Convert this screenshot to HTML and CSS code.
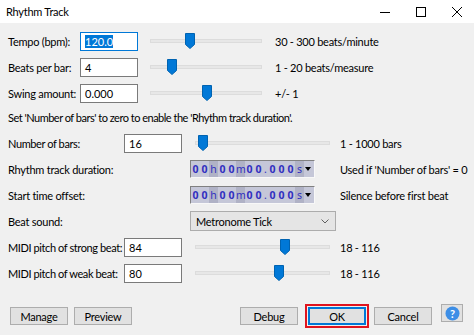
FILE: index.html
```html
<!DOCTYPE html>
<html lang="en">

<head>
    <meta name="viewport" content="width=device-width, initial-scale=1.0">
    <title>Rhythm Track</title>
    <link rel="stylesheet" href="styles.css">
</head>

<body>
    <div class="titlebar">
        <span class="title">Rhythm Track</span>
        <div class="win-buttons">
            <svg width="12" height="12" viewBox="0 0 12 12"><path d="M1 6.5h10" stroke="#000" stroke-width="1"/></svg>
            <svg width="12" height="12" viewBox="0 0 12 12"><rect x="1.5" y="1.5" width="9" height="9" fill="none" stroke="#000" stroke-width="1"/></svg>
            <svg width="12" height="12" viewBox="0 0 12 12"><path d="M1 1l10 10M11 1L1 11" stroke="#000" stroke-width="1"/></svg>
        </div>
    </div>

    <div class="dialog">
        <!-- top group -->
        <div class="row">
            <span class="label w72">Tempo (bpm):</span>
            <div class="input focused"><span class="selected">120.0</span></div>
            <div class="slider short"><div class="track"></div><svg class="thumb" style="left: 35px" width="10" height="16" viewBox="0 0 10 16"><path d="M0.5 0.5h9v11l-4.5 4-4.5-4z" fill="#0078d7" stroke="#0063b1"/></svg></div>
            <span class="hint">30 - 300 beats/minute</span>
        </div>
        <div class="row">
            <span class="label w72">Beats per bar:</span>
            <div class="input">4</div>
            <div class="slider short"><div class="track"></div><svg class="thumb" style="left: 17px" width="10" height="16" viewBox="0 0 10 16"><path d="M0.5 0.5h9v11l-4.5 4-4.5-4z" fill="#0078d7" stroke="#0063b1"/></svg></div>
            <span class="hint">1 - 20 beats/measure</span>
        </div>
        <div class="row">
            <span class="label w72">Swing amount:</span>
            <div class="input">0.000</div>
            <div class="slider short"><div class="track"></div><svg class="thumb" style="left: 52px" width="10" height="16" viewBox="0 0 10 16"><path d="M0.5 0.5h9v11l-4.5 4-4.5-4z" fill="#0078d7" stroke="#0063b1"/></svg></div>
            <span class="hint">+/- 1</span>
        </div>

        <p class="note">Set 'Number of bars' to zero to enable the 'Rhythm track duration'.</p>

        <!-- second group -->
        <div class="row">
            <span class="label w116">Number of bars:</span>
            <div class="input">16</div>
            <div class="slider long"><div class="track"></div><svg class="thumb" style="left: 3px" width="10" height="16" viewBox="0 0 10 16"><path d="M0.5 0.5h9v11l-4.5 4-4.5-4z" fill="#0078d7" stroke="#0063b1"/></svg></div>
            <span class="hint">1 - 1000 bars</span>
        </div>
        <div class="row">
            <span class="label w182">Rhythm track duration:</span>
            <div class="timectl">
                <span>0</span><span>0</span><span class="unit">h</span><span>0</span><span>0</span><span class="unit">m</span><span>0</span><span>0</span><span class="dot">.</span><span>0</span><span>0</span><span>0</span><span class="unit">s</span><span class="arrow"></span>
            </div>
            <span class="hint wide">Used if 'Number of bars' = 0</span>
        </div>
        <div class="row">
            <span class="label w182">Start time offset:</span>
            <div class="timectl">
                <span>0</span><span>0</span><span class="unit">h</span><span>0</span><span>0</span><span class="unit">m</span><span>0</span><span>0</span><span class="dot">.</span><span>0</span><span>0</span><span>0</span><span class="unit">s</span><span class="arrow"></span>
            </div>
            <span class="hint wide">Silence before first beat</span>
        </div>
        <div class="row">
            <span class="label w182">Beat sound:</span>
            <div class="select">
                <span>Metronome Tick</span>
                <svg width="8" height="5" viewBox="0 0 8 5"><path d="M0.5 0.5l3.5 3.5 3.5-3.5" fill="none" stroke="#606060"/></svg>
            </div>
        </div>
        <div class="row">
            <span class="label w116">MIDI pitch of strong beat:</span>
            <div class="input">84</div>
            <div class="slider long"><div class="track"></div><svg class="thumb" style="left: 85px" width="10" height="16" viewBox="0 0 10 16"><path d="M0.5 0.5h9v11l-4.5 4-4.5-4z" fill="#0078d7" stroke="#0063b1"/></svg></div>
            <span class="hint">18 - 116</span>
        </div>
        <div class="row">
            <span class="label w116">MIDI pitch of weak beat:</span>
            <div class="input">80</div>
            <div class="slider long"><div class="track"></div><svg class="thumb" style="left: 79px" width="10" height="16" viewBox="0 0 10 16"><path d="M0.5 0.5h9v11l-4.5 4-4.5-4z" fill="#0078d7" stroke="#0063b1"/></svg></div>
            <span class="hint">18 - 116</span>
        </div>

        <div class="buttons">
            <button class="btn">Manage</button>
            <button class="btn">Preview</button>
            <span class="spacer"></span>
            <button class="btn">Debug</button>
            <span class="ok-mark"><button class="btn default">OK</button></span>
            <button class="btn">Cancel</button>
            <button class="help">
                <svg width="15" height="15" viewBox="0 0 15 15"><circle cx="7.5" cy="7.5" r="7" fill="#3d8ee6"/><text x="7.5" y="11.5" text-anchor="middle" font-family="Lato, sans-serif" font-size="11" font-weight="bold" fill="#fff">?</text></svg>
            </button>
        </div>
    </div>
</body>

</html>
```

FILE: styles.css
```css
html,
body {
    margin: 0;
    padding: 0;
}

body {
    width: 474px;
    height: 335px;
    overflow: hidden;
    background: #f0f0f0;
    font-family: Lato, 'Liberation Sans', sans-serif;
    font-size: 11px;
    letter-spacing: -0.25px;
    color: #000;
}

.titlebar {
    height: 23px;
    background: #fff;
    display: flex;
    align-items: center;
    justify-content: space-between;
}

.title {
    padding-left: 6px;
}

.win-buttons {
    display: flex;
    gap: 24px;
    padding-right: 11px;
}

.dialog {
    padding: 5px 0 0 8px;
}

.row {
    height: 26px;
    display: flex;
    align-items: center;
}

.label {
    flex: none;
    white-space: nowrap;
}

.w72 {
    width: 72px;
}

.w116 {
    width: 116px;
    letter-spacing: -0.4px;
}

.w182 {
    width: 182px;
}

.input {
    width: 52px;
    height: 17px;
    line-height: 17px;
    padding-left: 4px;
    background: #fff;
    border: 1px solid #7a7a7a;
    letter-spacing: 0;
    flex: none;
}

.input.focused {
    border-color: #0078d7;
}

.selected {
    background: #0078d7;
    color: #fff;
}

.slider {
    position: relative;
    height: 18px;
    flex: none;
}

.slider.short {
    width: 112px;
    margin-left: 12px;
    margin-right: 13px;
}

.slider.long {
    width: 135px;
    margin-left: 13px;
    margin-right: 10px;
}

.track {
    margin-top: 7px;
    height: 2px;
    background: #e7e7e7;
    border: 1px solid #dcdcdc;
}

.thumb {
    position: absolute;
    top: 1px;
}

.hint {
    white-space: nowrap;
}

.note {
    margin: 0;
    height: 24px;
    line-height: 24px;
    letter-spacing: -0.5px;
    white-space: nowrap;
}

.timectl {
    width: 123px;
    height: 16px;
    display: flex;
    align-items: center;
    background: #c5c7d8;
    border-top: 1px solid #808080;
    border-left: 1px solid #808080;
    border-right: 1px solid #f8f8f8;
    border-bottom: 1px solid #f8f8f8;
    color: #3030c0;
    font-family: 'Noto Sans', sans-serif;
    font-weight: bold;
    font-size: 10.5px;
    letter-spacing: 0;
    flex: none;
}

.timectl span {
    width: 9px;
    height: 16px;
    line-height: 16px;
    text-align: center;
}

.timectl .unit {
    background: #b0b2c6;
    font-weight: normal;
}

.timectl .dot {
    width: 5px;
    font-weight: normal;
}

.timectl .arrow {
    width: 0;
    height: 0;
    border-left: 3px solid transparent;
    border-right: 3px solid transparent;
    border-top: 4px solid #000;
    margin-left: 1px;
}

.hint.wide {
    margin-left: 25px;
}

.select {
    width: 133px;
    height: 18px;
    padding: 0 6px 0 5px;
    display: flex;
    align-items: center;
    justify-content: space-between;
    background: #e5e5e5;
    border: 1px solid #acacac;
}

.buttons {
    display: flex;
    align-items: center;
    margin-top: 18px;
    padding-right: 11px;
    height: 24px;
}

.spacer {
    flex: 1;
}

.btn {
    box-sizing: border-box;
    font-family: Lato, 'Liberation Sans', sans-serif;
    font-size: 11px;
    letter-spacing: -0.25px;
    width: 58px;
    height: 18px;
    padding: 0;
    margin: 0 7px 0 0;
    background: #e1e1e1;
    border: 1px solid #adadad;
    color: #000;
    flex: none;
}

.buttons > .btn:first-child {
    margin-left: 2px;
    margin-right: 6px;
}

.ok-mark {
    border: 2px solid #e0141e;
    padding: 1px;
    margin-right: 5px;
    display: flex;
    flex: none;
}

.ok-mark .btn {
    margin: 0;
}

.btn.default {
    border: 1px solid #0078d7;
    box-shadow: inset 0 0 0 1px #0078d7;
}

.help {
    box-sizing: border-box;
    width: 22px;
    height: 18px;
    padding: 0;
    margin: 0 0 0 2px;
    align-self: flex-start;
    background: #e1e1e1;
    border: 1px solid #adadad;
    display: flex;
    align-items: center;
    justify-content: center;
    flex: none;
}
```
